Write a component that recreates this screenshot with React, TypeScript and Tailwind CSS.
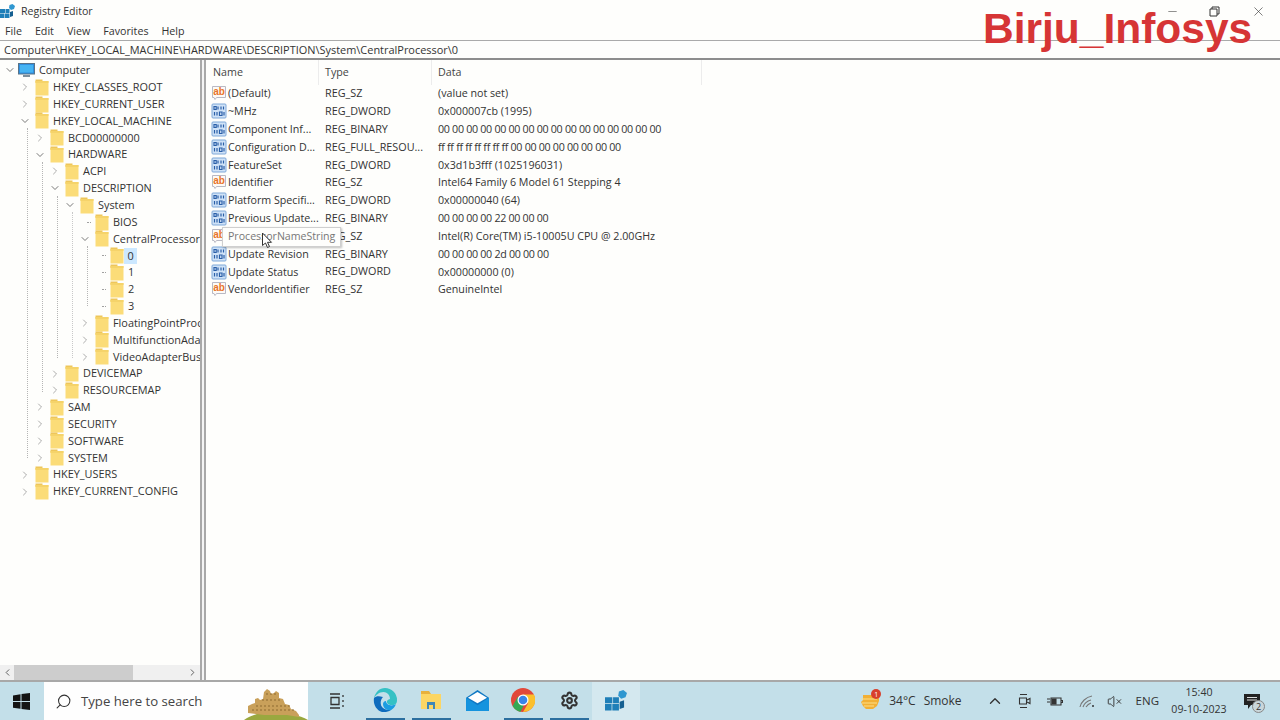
import { ChevronDown, ChevronRight, ChevronUp, Minus, Search, Settings, VolumeX, X } from "lucide-react";

type TreeRow = {
  label: string;
  depth: number;
  state?: "open" | "closed";
  selected?: boolean;
};

const treeRows: TreeRow[] = [
  { label: "HKEY_CLASSES_ROOT", depth: 1, state: "closed" },
  { label: "HKEY_CURRENT_USER", depth: 1, state: "closed" },
  { label: "HKEY_LOCAL_MACHINE", depth: 1, state: "open" },
  { label: "BCD00000000", depth: 2, state: "closed" },
  { label: "HARDWARE", depth: 2, state: "open" },
  { label: "ACPI", depth: 3, state: "closed" },
  { label: "DESCRIPTION", depth: 3, state: "open" },
  { label: "System", depth: 4, state: "open" },
  { label: "BIOS", depth: 5 },
  { label: "CentralProcessor", depth: 5, state: "open" },
  { label: "0", depth: 6, selected: true },
  { label: "1", depth: 6 },
  { label: "2", depth: 6 },
  { label: "3", depth: 6 },
  { label: "FloatingPointProcessor", depth: 5, state: "closed" },
  { label: "MultifunctionAdapter", depth: 5, state: "closed" },
  { label: "VideoAdapterBus", depth: 5, state: "closed" },
  { label: "DEVICEMAP", depth: 3, state: "closed" },
  { label: "RESOURCEMAP", depth: 3, state: "closed" },
  { label: "SAM", depth: 2, state: "closed" },
  { label: "SECURITY", depth: 2, state: "closed" },
  { label: "SOFTWARE", depth: 2, state: "closed" },
  { label: "SYSTEM", depth: 2, state: "closed" },
  { label: "HKEY_USERS", depth: 1, state: "closed" },
  { label: "HKEY_CURRENT_CONFIG", depth: 1, state: "closed" },
];

const depthPad = ["pl-[4px]", "pl-[19px]", "pl-[34px]", "pl-[49px]", "pl-[64px]", "pl-[79px]", "pl-[94px]"];

const values: { name: string; type: string; data: string; kind: "sz" | "bin" }[] = [
  { name: "(Default)", type: "REG_SZ", data: "(value not set)", kind: "sz" },
  { name: "~MHz", type: "REG_DWORD", data: "0x000007cb (1995)", kind: "bin" },
  { name: "Component Inf...", type: "REG_BINARY", data: "00 00 00 00 00 00 00 00 00 00 00 00 00 00 00 00", kind: "bin" },
  { name: "Configuration D...", type: "REG_FULL_RESOU...", data: "ff ff ff ff ff ff ff ff 00 00 00 00 00 00 00 00", kind: "bin" },
  { name: "FeatureSet", type: "REG_DWORD", data: "0x3d1b3fff (1025196031)", kind: "bin" },
  { name: "Identifier", type: "REG_SZ", data: "Intel64 Family 6 Model 61 Stepping 4", kind: "sz" },
  { name: "Platform Specifi...", type: "REG_DWORD", data: "0x00000040 (64)", kind: "bin" },
  { name: "Previous Update...", type: "REG_BINARY", data: "00 00 00 00 22 00 00 00", kind: "bin" },
  { name: "", type: "REG_SZ", data: "Intel(R) Core(TM) i5-10005U CPU @ 2.00GHz", kind: "sz" },
  { name: "Update Revision", type: "REG_BINARY", data: "00 00 00 00 2d 00 00 00", kind: "bin" },
  { name: "Update Status", type: "REG_DWORD", data: "0x00000000 (0)", kind: "bin" },
  { name: "VendorIdentifier", type: "REG_SZ", data: "GenuineIntel", kind: "sz" },
];

function Folder() {
  return (
    <svg width="14" height="17" viewBox="0 0 14 17" className="shrink-0">
      <rect x="0.5" y="0.5" width="7" height="3" fill="#eec65a" />
      <rect x="0.5" y="2" width="13" height="14.5" fill="#fbdc78" />
      <rect x="0.5" y="2" width="13" height="2" fill="#f5d36a" />
    </svg>
  );
}

function SzIcon() {
  return (
    <svg width="16" height="16" viewBox="0 0 16 16" className="shrink-0">
      <path d="M1.500 1.500h13v11h-9l-1.500 2-1-2h-1.500z" fill="#fdfaf6" stroke="#b9b9c4" />
      <text x="2.200" y="10" fontSize="10" fontWeight="700" fontFamily="Liberation Sans, sans-serif" fill="#e8752a">ab</text>
    </svg>
  );
}

function BinIcon() {
  return (
    <svg width="16" height="16" viewBox="0 0 16 16" className="shrink-0">
      <rect x="1" y="1" width="14" height="14" rx="1" fill="#cfe2f7" stroke="#7fa8d8" />
      <path d="M3 3.500h2.200v3H3zM7 3.500v3M10 3.500v3M12.500 3.500v3M3.500 9v3.500M6 9v3.500M8.500 9h2.500v3.500H8.500zM13 9v3.500" fill="none" stroke="#2a5fa8" strokeWidth="1.200" />
    </svg>
  );
}

function Computer() {
  return (
    <svg width="17" height="15" viewBox="0 0 17 15" className="shrink-0">
      <rect x="0.5" y="0.500" width="16" height="10.500" fill="#2f8fe0" stroke="#5a7488" />
      <rect x="2" y="2" width="13" height="7.500" fill="#46b4f2" />
      <rect x="5" y="12" width="7" height="2" fill="#7d8f9c" />
    </svg>
  );
}

function RegeditIcon({ size = 15 }: { size?: number }) {
  return (
    <svg width={size} height={size} viewBox="0 0 15 15">
      <path d="M0 5h5v4H0zM5.500 5h4v4h-4zM0 9.500h4.500V14H0zM5 9.500h4.500V14H5z" fill="#1f7fb8" />
      <path d="M9.500 1l3-1 2.500 2-1 3-3 1-2-2z" fill="#2f97d0" />
      <path d="M10 8l3-1v5l-3 1z" fill="#155f90" />
    </svg>
  );
}

function Tree() {
  return (
    <div className="relative flex-1 overflow-hidden pt-[2px]">
      {/* dotted guide lines sit behind the rows */}
      <span className="absolute left-[27px] top-[68px] h-[330px] border-l border-dotted border-[#b5b5b5]" />
      <span className="absolute left-[42px] top-[102px] h-[230px] border-l border-dotted border-[#b5b5b5]" />
      <span className="absolute left-[57px] top-[136px] h-[162px] border-l border-dotted border-[#b5b5b5]" />
      <span className="absolute left-[72px] top-[152px] h-[146px] border-l border-dotted border-[#c8c8c8]" />
      <span className="absolute left-[87px] top-[186px] h-[60px] border-l border-dotted border-[#b5b5b5]" />
      <div className="relative flex h-[16.85px] items-center pl-[4px] text-[10.9px] text-[#333]">
        <ChevronDown size={12} strokeWidth={1.600} className="shrink-0 text-[#555]" />
        <span className="ml-[2px]"><Computer /></span>
        <span className="ml-[4px] whitespace-nowrap">Computer</span>
      </div>
      {treeRows.map((row) => (
        <div key={row.label} className={`relative flex h-[16.85px] items-center whitespace-nowrap text-[10.9px] text-[#333] ${depthPad[row.depth]}`}>
          <span className="flex w-[12px] shrink-0 items-center justify-center text-[#8a8a8a]">
            {row.state === "open" && <ChevronDown size={12} strokeWidth={1.600} className="text-[#555]" />}
            {row.state === "closed" && <ChevronRight size={12} strokeWidth={1.400} />}
            {!row.state && <span className="ml-[8px] w-[7px] border-t border-dotted border-[#a0a0a0]" />}
          </span>
          <span className="ml-[4px] flex shrink-0 items-center"><Folder /></span>
          <span className={row.selected ? "bg-[#cce8ff] px-[3.500px]" : "ml-[4px]"}>{row.label}</span>
        </div>
      ))}
    </div>
  );
}

function ValueList() {
  return (
    <div className="relative flex-1 overflow-hidden text-[10.7px] text-[#333]">
      <div className="flex h-[24.500px] items-center text-[#444]">
        <div className="h-full w-[113px] border-r border-[#ececec] pl-[7px] leading-[25px]">Name</div>
        <div className="h-full w-[113px] border-r border-[#ececec] pl-[6px] leading-[25px]">Type</div>
        <div className="h-full w-[270px] border-r border-[#ececec] pl-[6px] leading-[25px]">Data</div>
      </div>
      {values.map((v) => (
        <div key={v.data} className="flex h-[17.820px] items-center whitespace-nowrap">
          <div className="flex w-[113px] items-center gap-[1px] pl-[5px]">
            {v.kind === "sz" ? <SzIcon /> : <BinIcon />}
            <span>{v.name}</span>
          </div>
          <div className="w-[113px] pl-[6px] text-[10.8px]">{v.type}</div>
          <div className={`pl-[6px] ${/^[0-9a-f]{2} /.test(v.data) ? "tracking-[-0.3px]" : ""}`}>{v.data}</div>
        </div>
      ))}
      {/* tooltip over the hovered row */}
      <div className="absolute left-[16px] top-[167px] flex h-[20px] items-center border border-[#cfcfcf] bg-[#fefefc] px-[5px] text-[10.6px] text-[#777] shadow-[1px_1px_2px_rgba(0,0,0,0.25)]">
        ProcessorNameString
      </div>
      <svg width="14" height="18" viewBox="0 0 14 18" className="absolute left-[55px] top-[172px]">
        <path d="M1.500 1v12.500l3-2.500 2 4.500 2-1-2-4.200h4z" fill="#fff" stroke="#333" strokeWidth="1" />
      </svg>
    </div>
  );
}

function TaskSlot({ children, underline }: { children: React.ReactNode; underline?: boolean }) {
  return (
    <div className="flex h-full w-[46px] shrink-0 flex-col items-center">
      <div className="flex flex-1 items-center justify-center">{children}</div>
      <div className={`h-[2px] w-[39px] ${underline ? "bg-[#2c6f9f]" : ""}`} />
    </div>
  );
}

function Taskbar() {
  return (
    <div className="flex h-[38px] items-center bg-[#c3dfe9] text-[#2a2a2a]">
      <div className="flex w-[44px] shrink-0 items-center pl-[13px]">
        <svg width="17" height="17" viewBox="0 0 17 17">
          <path d="M0 2.400L7.500 1.300v6.800H0zM8.500 1.100L17 0v8.100H8.500zM0 9h7.500v6.800L0 14.700zM8.500 9H17v8l-8.500-1.100z" fill="#141414" />
        </svg>
      </div>
      <div className="flex h-full w-[264px] shrink-0 items-center overflow-hidden bg-[#fefefe]">
        <Search size={17} strokeWidth={1.500} className="ml-[11px] -scale-x-100 text-[#333]" />
        <span className="ml-[9px] pt-[2px] text-[13.200px] text-[#444]">Type here to search</span>
        <svg width="64" height="38" viewBox="0 0 64 38" className="ml-auto shrink-0">
          <path d="M0 38c8-6 22-9 32-8s24 3 32 8z" fill="#9aa83f" />
          <path d="M4 31v-7l4-2 3-1v-4l3-1 2 2 3-1 1-7 3-3 3 2 1 3 3-1 2-2 3 2v5l4 1 2 5 4 1 2 4 5 2 3 4v2l-12-2H20z" fill="#c9a05a" />
          <path d="M12 24h36M18 18h20M22 12h12M8 28h44" stroke="#8d6a30" strokeWidth="1.200" strokeDasharray="2 2" fill="none" />
        </svg>
      </div>
      <div className="flex h-full w-[54px] shrink-0 items-center justify-center pl-[12px] pr-[8px]">
        <svg width="16" height="16" viewBox="0 0 16 16" fill="none" stroke="#333" strokeWidth="1.300">
          <path d="M1 1h10M1 15h10M2 4.500h8v7H2zM14 2v2M14 7v2M14 12v2" />
        </svg>
      </div>
      <TaskSlot underline>
        <svg width="24" height="24" viewBox="0 0 24 24">
          <path d="M12 0a12 12 0 0 1 12 12c0 2-.500 3.500-2 4.500-2 1.300-7 1-8-2-.500-2 1-3 3-3.500C17 7 14 4 10.500 4 6 4 3 7 1 10 2.500 4 6.500 0 12 0z" fill="#35c1c4" />
          <path d="M1 10C0 16 3 22 9 24c4 .500 8-.500 10-3-3 1.500-7 1-9.500-1.500C7 17 7 12 10 9 6 8 3 8 1 10z" fill="#0f6cbd" />
          <path d="M13 13c0 4 6 6 10 3-1 3-3 5-5 6-4 1-8-2-8-6 0-1.500 1-3 3-3z" fill="#1b9de2" />
        </svg>
      </TaskSlot>
      <TaskSlot underline>
        <svg width="22" height="20" viewBox="0 0 22 20">
          <path d="M1 1h8l2 3H1z" fill="#e8b13c" />
          <path d="M1 4h20v15H1z" fill="#fcd664" />
          <path d="M7 12h8v7h-2v-4H9v4H7z" fill="#3f87b8" />
        </svg>
      </TaskSlot>
      <TaskSlot>
        <svg width="23" height="21" viewBox="0 0 24 22">
          <path d="M0 8L12 0l12 8v14H0z" fill="#0f78c4" />
          <path d="M2 8L12 2l10 6-10 6z" fill="#ffffff" />
          <path d="M0 8l12 8 12-8v14H0z" fill="#1593de" />
        </svg>
      </TaskSlot>
      <TaskSlot underline>
        <svg width="24" height="24" viewBox="0 0 24 24">
          <circle cx="12" cy="12" r="12" fill="#e2483a" />
          <path d="M12 24a12 12 0 0 1-10.400-6L7 8.500 12.500 18l-3 5.700z" fill="#35a853" />
          <path d="M12 6.500h10.900A12 12 0 0 1 12 24l5-8.500z" fill="#fbc02d" />
          <circle cx="12" cy="12" r="5.500" fill="#fff" />
          <circle cx="12" cy="12" r="4.300" fill="#3a85e8" />
        </svg>
      </TaskSlot>
      <TaskSlot underline>
        <Settings size={19} strokeWidth={2.600} className="text-[#333]" />
      </TaskSlot>
      <div className="flex h-full w-[48px] shrink-0 items-center justify-center bg-[#d4e8ef]">
        <RegeditIcon size={22} />
      </div>
      <div className="ml-auto flex h-full items-center text-[12px] text-[#333]">
        <div className="relative mr-[9px] h-[18px] w-[20px]">
          <svg width="20" height="18" viewBox="0 0 20 18">
            <path d="M3 3h13l3 3v3l-2 5-4 3H6l-3-3-2-4 2-2z" fill="#f2b035" />
            <path d="M1 7h16M2 11h15M4 14h10" stroke="#fbe08a" strokeWidth="1.200" />
          </svg>
          <span className="absolute right-[-1px] top-[-3px] flex h-[10px] w-[10px] items-center justify-center rounded-full bg-[#d8402c] text-[7px] leading-none text-white">1</span>
        </div>
        <span>34°C</span>
        <span className="ml-[8px] mr-[24px]">Smoke</span>
        <ChevronUp size={18} strokeWidth={1.800} className="mr-[14px]" />
        <svg width="14" height="16" viewBox="0 0 14 16" fill="none" stroke="#333" strokeWidth="1.100" className="mr-[15px]">
          <path d="M2 1.500h7M2 14.500h7M1.500 5h7v6h-7zM9 7l3-1.500v5L9 9" />
        </svg>
        <svg width="16" height="11" viewBox="0 0 16 11" fill="none" stroke="#333" strokeWidth="1.100" className="mr-[16px]">
          <path d="M4 2h10v7H4zM14 4.500h1.500v2H14" />
          <path d="M5 3h4v5H5zM0 3h3M0 6h3" fill="#333" />
        </svg>
        <svg width="16" height="13" viewBox="0 0 16 13" fill="none" stroke="#777" strokeWidth="1.100" className="mr-[12px]">
          <path d="M1 12C2 7 7 2 13 1M4 12c1-3 4-6 8-7M7 12c1-1.500 2-3 5-4" />
          <circle cx="14" cy="11" r="1" fill="#333" stroke="none" />
        </svg>
        <VolumeX size={15} strokeWidth={1.500} className="mr-[14px]" />
        <span className="text-[11.500px]">ENG</span>
        <div className="ml-[11px] flex w-[58px] flex-col items-center whitespace-nowrap text-[10.600px] leading-[17px]">
          <span>15:40</span>
          <span>09-10-2023</span>
        </div>
        <div className="relative ml-[16px] mr-[21px] h-[15px] w-[15px]">
          <svg width="16" height="15" viewBox="0 0 16 15"><path d="M0 0h16v11H7l-3 4v-4H0z" fill="#222" /><path d="M3 3.500h10M3 6h10" stroke="#ddd" /></svg>
          <span className="absolute left-[8px] top-[6px] flex h-[13px] w-[13px] items-center justify-center rounded-full border border-[#888] bg-[#c9d6da] text-[9px] leading-none">2</span>
        </div>
      </div>
    </div>
  );
}

export default function App() {
  return (
    <div className="relative flex h-[720px] w-[1280px] flex-col overflow-hidden bg-[#fefefc] font-['Open_Sans',sans-serif]">
      <div className="flex h-[22px] shrink-0 items-center text-[10.6px] text-[#333]">
        <RegeditIcon />
        <span className="ml-[6px] pt-[2px]">Registry Editor</span>
        <div className="ml-auto flex items-center text-[#333]">
          <Minus size={13} strokeWidth={1} />
          <svg width="11" height="11" viewBox="0 0 11 11" fill="none" stroke="#333" className="ml-[30px]">
            <path d="M1 3h7v7H1zM3 3V1h7v7H8" />
          </svg>
          <X size={15} strokeWidth={1} className="ml-[31px] mr-[14px]" />
        </div>
      </div>
      <div className="flex h-[18px] shrink-0 items-center gap-[13px] pl-[5px] text-[10.7px] text-[#333]">
        <span>File</span>
        <span>Edit</span>
        <span>View</span>
        <span>Favorites</span>
        <span>Help</span>
      </div>
      <div className="flex h-[20px] shrink-0 items-center border-t border-b-2 border-t-[#aaaaaa] border-b-[#8d8d8d] pl-[4px] pt-[2px] text-[10.95px] text-[#333]">
        Computer\HKEY_LOCAL_MACHINE\HARDWARE\DESCRIPTION\System\CentralProcessor\0
      </div>
      <div className="flex min-h-0 flex-1 border-b-2 border-[#a8a8a8]">
        <div className="flex w-[200px] shrink-0 flex-col">
          <Tree />
          <div className="flex h-[15px] shrink-0 items-center bg-[#f0f0f0] text-[#555]">
            <ChevronRight size={11} strokeWidth={2} className="ml-[2px] rotate-180" />
            <div className="ml-px h-full w-[119px] bg-[#cdcdcd]" />
            <ChevronRight size={11} strokeWidth={2} className="ml-auto mr-[2px]" />
          </div>
        </div>
        <div className="w-[6px] shrink-0 border-x-2 border-[#a8a8a8] bg-[#f4f4f4]" />
        <ValueList />
      </div>
      <Taskbar />
      {/* channel watermark burned into the video */}
      <div className="absolute left-[983px] top-[3px] font-['Liberation_Sans'] text-[42.500px] font-bold leading-[52px] text-[#d63535]">
        Birju_Infosys
      </div>
    </div>
  );
}
